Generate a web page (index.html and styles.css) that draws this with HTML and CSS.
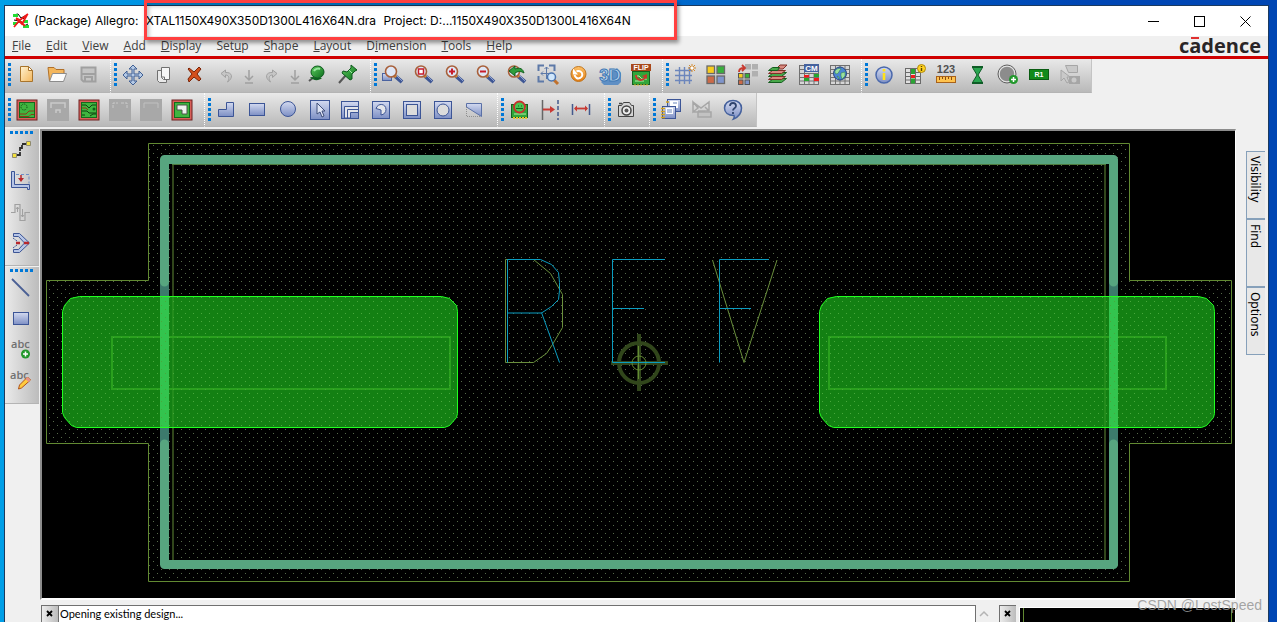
FILE: index.html
```
<!DOCTYPE html>
<html lang="en">
<head>
    <meta charset="UTF-8">
    <meta name="viewport" content="width=device-width, initial-scale=1.0">
    <title>(Package) Allegro</title>
    <link rel="stylesheet" href="styles.css">
</head>
<body>
    <!-- Shared gradients and icon parts -->
    <svg class="defs" aria-hidden="true">
        <defs>
            <linearGradient id="blue" x1="0" y1="0" x2="0" y2="1"><stop offset="0" stop-color="#d3daf0"/><stop offset="1" stop-color="#7d8fc4"/></linearGradient>
            <linearGradient id="paper" x1="0" y1="0" x2="1" y2="1"><stop offset="0" stop-color="#fff3d2"/><stop offset="1" stop-color="#f3b65c"/></linearGradient>
            <linearGradient id="green" x1="0" y1="0" x2="1" y2="1"><stop offset="0" stop-color="#5fce5f"/><stop offset="1" stop-color="#0b6b1c"/></linearGradient>
            <linearGradient id="orange" x1="0" y1="0" x2="0" y2="1"><stop offset="0" stop-color="#ffc36a"/><stop offset="1" stop-color="#e07a10"/></linearGradient>
            <g id="lens">
                <path d="M12 12l7 6" stroke="#3f5794" stroke-width="4"/>
                <path d="M13 11l6 6" stroke="#8ea1d2" stroke-width="1"/>
                <path d="M11 11l2 2" stroke="#e08a2a" stroke-width="3"/>
                <circle cx="8" cy="7.500" r="5.500" fill="#dfe6f5" stroke="#a8603a" stroke-width="1.600"/>
            </g>
            <g id="pcb">
                <rect x="1" y="1" width="20" height="20" fill="#d8605a" stroke="#6e2020"/>
                <rect x="3.500" y="3.500" width="15" height="15" fill="#3fb53f" stroke="#156b1c"/>
            </g>
            <g id="tile"><rect x="1.500" y="1.500" width="19" height="19" fill="url(#blue)" stroke="#3c5596"/></g>
        </defs>
    </svg>

    <div class="window">
        <header class="title-bar">
            <svg class="app-icon" viewBox="0 0 18 18">
                <path d="M1 3l5-1 3 4 6-3M2 8l5 1 4-3 5 5M3 13l5-4 4 5 4-2" fill="none" stroke="#000"/>
                <path d="M1 2h5v3H1zM1 10h4v3H1zM12 8h4v3h-4zM11 13h6v3h-6zM7 9h3v2H7z" fill="#22dd33"/>
                <path d="M4 6l4 2 8-6M2 15l5-6 3 3 5-9M4 7l5 3 4 4" fill="none" stroke="#f01818" stroke-width="1.800"/>
            </svg>
            <h1 class="title-text">(Package) Allegro: <span class="title-file">XTAL1150X490X350D1300L416X64N.dra</span> <span>Project: D:...1150X490X350D1300L416X64N</span></h1>
            <div class="window-buttons">
                <button type="button" aria-label="Minimize"><svg viewBox="0 0 11 11"><path d="M0 5.500h11" stroke="#000"/></svg></button>
                <button type="button" aria-label="Maximize"><svg viewBox="0 0 11 11"><rect x=".5" y=".5" width="10" height="10" fill="none" stroke="#000"/></svg></button>
                <button type="button" aria-label="Close"><svg viewBox="0 0 11 11"><path d="M.5.5l10 10M10.500.5l-10 10" stroke="#000"/></svg></button>
            </div>
        </header>

        <nav class="menu-bar">
            <a href="#"><u>F</u>ile</a>
            <a href="#"><u>E</u>dit</a>
            <a href="#"><u>V</u>iew</a>
            <a href="#"><u>A</u>dd</a>
            <a href="#"><u>D</u>isplay</a>
            <a href="#">Set<u>u</u>p</a>
            <a href="#"><u>S</u>hape</a>
            <a href="#"><u>L</u>ayout</a>
            <a href="#">D<u>i</u>mension</a>
            <a href="#"><u>T</u>ools</a>
            <a href="#"><u>H</u>elp</a>
            <span class="brand">c<span class="brand-a">a</span>dence</span>
        </nav>

        <div class="toolbar-row row-main">
            <div class="toolbar">
                <span class="grip"></span>
                <button type="button" aria-label="New"><svg viewBox="0 0 22 22"><path d="M4.500 2.500h8l4 4v11h-12z" fill="url(#paper)" stroke="#a8742c"/><path d="M12.500 2.500v4h4z" fill="#fff" stroke="#a8742c"/></svg></button>
                <button type="button" aria-label="Open"><svg viewBox="0 0 22 22"><path d="M1 3.500h6l2 2h8v6L2.500 17z" fill="#f3b65c" stroke="#b0702a"/><path d="M5.500 9.500h14l-3 8h-14z" fill="#fbfbfb" stroke="#8c8c8c"/></svg></button>
                <button type="button" aria-label="Save" disabled><svg viewBox="0 0 22 22"><path d="M3.500 3.500h14v14h-12l-2-2z" fill="#c4c4c4" stroke="#a0a0a0" stroke-width="2"/><path d="M4 10h13M7 17v-4h7v4" fill="none" stroke="#a0a0a0" stroke-width="2"/></svg></button>
            </div>
            <div class="toolbar">
                <span class="grip"></span>
                <button type="button" aria-label="Move"><svg viewBox="0 0 22 22"><path d="M10 5v5H5V7l-4 4 4 4v-3h5v5H7l4 4 4-4h-3v-5h5v3l4-4-4-4v3h-5V5h3l-4-4-4 4z" fill="#b5c9e4" stroke="#3f5f94"/></svg></button>
                <button type="button" aria-label="Copy"><svg viewBox="0 0 22 22"><path d="M4.500 6.500h9v12h-7l-2-2z" fill="#e9e9e9" stroke="#707070"/><path d="M8.500 3.500h8v12h-6l-2-2z" fill="#f6f6f6" stroke="#707070"/><path d="M8.500 13h3v2.500" fill="none" stroke="#707070"/></svg></button>
                <button type="button" aria-label="Delete"><svg viewBox="0 0 22 22"><path d="M5 4l5 4 5-5 2 2-4 5 4 5-2 2-5-4-5 5-1-3 4-5-4-5z" fill="#d4501c" stroke="#7a2408"/></svg></button>
                <button type="button" aria-label="Undo" disabled><svg viewBox="0 0 22 22"><path d="M10.500 6L6 9.500l4.500 4v-2.500c4 0 4 4 2 7 6-4 5-10-2-9.500z" fill="#c6c6c6" stroke="#a0a0a0"/></svg></button>
                <button type="button" class="narrow" aria-label="Undo list" disabled><svg viewBox="0 0 14 22"><path d="M7 6v10M3 12l4 4 4-4M3 19h8" fill="none" stroke="#a0a0a0" stroke-width="1.500"/></svg></button>
                <button type="button" aria-label="Redo" disabled><svg viewBox="0 0 22 22"><path d="M11.500 6l4.500 3.500-4.500 4v-2.500c-4 0-4 4-2 7-6-4-5-10 2-9.500z" fill="#c6c6c6" stroke="#a0a0a0"/></svg></button>
                <button type="button" class="narrow" aria-label="Redo list" disabled><svg viewBox="0 0 14 22"><path d="M7 6v10M3 12l4 4 4-4M3 19h8" fill="none" stroke="#a0a0a0" stroke-width="1.500"/></svg></button>
                <button type="button" aria-label="Unfix"><svg viewBox="0 0 22 22"><path d="M2 17l5-4" stroke="#555" stroke-width="2"/><path d="M3 13c3 4 9 4 12 1z" fill="#0f6420"/><ellipse cx="10.500" cy="8" rx="6.500" ry="6" fill="url(#green)" stroke="#0e5a1e"/><path d="M7 7c1-2 4-3 6-2" fill="none" stroke="#9ae6a0" stroke-width="2"/></svg></button>
                <button type="button" aria-label="Fix"><svg viewBox="0 0 22 22"><path d="M1 19l7-8" stroke="#555" stroke-width="2"/><path d="M13 1l6 5-2 1-3 3v5l-2 1-8-7 1-2 4 1 4-4z" fill="url(#green)" stroke="#0e5a1e"/><path d="M11 6l3 3" stroke="#a0eaa6"/></svg></button>
            </div>
            <div class="toolbar">
                <span class="grip"></span>
                <button type="button" aria-label="Zoom points"><svg viewBox="0 0 22 22"><rect x=".5" y="9.500" width="9" height="7" fill="url(#blue)" stroke="#4a62a0"/><use href="#lens" x="1"/></svg></button>
                <button type="button" aria-label="Zoom fit"><svg viewBox="0 0 22 22"><use href="#lens"/><rect x="5.500" y="5" width="5" height="5" fill="#fff" stroke="#c81c2c" stroke-width="1.500"/></svg></button>
                <button type="button" aria-label="Zoom in"><svg viewBox="0 0 22 22"><use href="#lens"/><path d="M8 4.500v6M5 7.500h6" stroke="#c81c2c" stroke-width="2"/></svg></button>
                <button type="button" aria-label="Zoom out"><svg viewBox="0 0 22 22"><use href="#lens"/><path d="M5 7.500h6" stroke="#c81c2c" stroke-width="2"/></svg></button>
                <button type="button" aria-label="Zoom previous"><svg viewBox="0 0 22 22"><use href="#lens"/><path d="M3 7l6-5v3c5-2 8 0 9 4-3-2-6-2-9 0v3z" fill="#2f9e3d" stroke="#13601f"/></svg></button>
                <button type="button" aria-label="Zoom selection"><svg viewBox="0 0 22 22"><path d="M1.500 7V1.500H7M12 1.500h5.500V7M1.500 12v5.500H7" fill="none" stroke="#5d79a8" stroke-width="2"/><path d="M9.500 3v12M4 9.500h12M7.500 5l2-2 2 2M6 7.500l-2 2 2 2" fill="none" stroke="#5d79a8"/><path d="M17 16l4 4" stroke="#c0712c" stroke-width="3"/><circle cx="14.500" cy="13" r="4" fill="#cfe6fb" stroke="#4a74b0" stroke-width="1.500"/></svg></button>
                <button type="button" aria-label="Redraw"><svg viewBox="0 0 22 22"><circle cx="10.500" cy="10" r="7.500" fill="url(#orange)" stroke="#c0751e"/><path d="M6.500 11c1 3 3 4 5.500 3 3-1 3-5 .5-6.500-1-.6-2.500-.7-4-.2" fill="none" stroke="#fff" stroke-width="2"/><path d="M5 4.500v6h5z" fill="#fff"/></svg></button>
                <button type="button" aria-label="3D view"><svg viewBox="0 0 22 22"><path d="M2 18l3 3h14l3-3V9l-4-5z" fill="#5f8fc4"/><text x="11" y="17" class="icon-3d">3D</text></svg></button>
                <button type="button" aria-label="Flip"><svg viewBox="0 0 22 22"><rect x="2.500" y="7.500" width="17" height="13" fill="#31a63a" stroke="#14601e"/><path d="M5 12h4l3 3h5M5 17h9" fill="none" stroke="#b7efa8"/><path d="M6 11c0 5 6 7 10 2" fill="none" stroke="#c43a2c" stroke-width="2"/><path d="M17 15v-5l-5 2z" fill="#c43a2c"/><path d="M4 21h14" stroke="#e2c22c" stroke-dasharray="2 1"/><rect x="1" y="0" width="20" height="7" fill="#a8481a"/><text x="11" y="6" class="icon-flip">FLIP</text></svg></button>
            </div>
            <div class="toolbar">
                <span class="grip"></span>
                <button type="button" aria-label="Grid"><svg viewBox="0 0 22 22"><path d="M1 6.500h17M1 11.500h17M1 16.500h17M5.500 3v17M10.500 3v17M15.500 3v17" stroke="#6c86bc" stroke-width="1.400"/><path d="M18 0v8M14 4h8M15 1l6 6M21 1l-6 6" stroke="#d58b2c"/><circle cx="18" cy="4" r="1.500" fill="#fff"/></svg></button>
                <button type="button" aria-label="Colors"><svg viewBox="0 0 22 22"><g stroke="#6a6a6a" stroke-width="1.300"><rect x="2" y="2" width="7.500" height="7.500" fill="#f8cc1e"/><rect x="12" y="2" width="7.500" height="7.500" fill="#38b03c"/><rect x="2" y="12" width="7.500" height="7.500" fill="#cc6a48"/><rect x="12" y="12" width="7.500" height="7.500" fill="#7f95cc"/></g></svg></button>
                <button type="button" aria-label="Shadow mode"><svg viewBox="0 0 22 22"><path d="M9 0h6v5.500H9zM16 0h6v5.500h-6zM16 7h6v5.500h-6z" fill="#b0b0b0"/><g stroke="#555"><rect x="2.500" y="9.500" width="4.500" height="4.500" fill="#f8cc1e"/><rect x="9" y="9.500" width="4.500" height="4.500" fill="#38b03c"/><rect x="2.500" y="16" width="4.500" height="4.500" fill="#cc6a48"/><rect x="9" y="16" width="4.500" height="4.500" fill="#7f95cc"/></g><path d="M3 8c0-3 2-4 5-4M6 1l3 3-3 3" fill="none" stroke="#c83a30" stroke-width="1.800"/></svg></button>
                <button type="button" aria-label="Cross section"><svg viewBox="0 0 22 22"><path d="M1.500 18.500l5-4h13l-5 4zM1.500 12.500l5-4h13l-5 4z" fill="#48a84a" stroke="#145c1e"/><path d="M1.500 15.500l4-3h13l-4 3zM1.500 9.500l4-3h13l-4 3zM9 5l4-4h7l-4 4z" fill="#d88a80" stroke="#803028"/><path d="M1.500 6.500l4-3h7l-2 3z" fill="#48a84a" stroke="#145c1e"/></svg></button>
                <button type="button" aria-label="Constraint manager"><svg viewBox="0 0 22 22"><rect x="1.500" y="1.500" width="19" height="19" fill="#d6d6d6" stroke="#707070"/><path d="M1 5.500h20M1 9.500h20M1 13.500h20M1 17h20M6.500 1v20M11 9v12M16 9v12" stroke="#707070"/><path d="M6 11h5v2.500H6zM16 14h5v3h-5z" fill="#ee1c1c"/><path d="M6 14h5v3H6zM16 10h5v3h-5z" fill="#25a52e"/><rect x="6" y="0" width="15" height="8" fill="#46629e"/><text x="13.500" y="7" class="icon-cm">CM</text></svg></button>
                <button type="button" aria-label="Global view"><svg viewBox="0 0 22 22"><rect x="1.500" y="1.500" width="19" height="19" fill="#d6d6d6" stroke="#707070"/><path d="M1 5.500h20M1 9.500h20M1 13.500h20M1 17h20M6.500 1v20M11 1v20M16 1v20" stroke="#707070"/><circle cx="11" cy="9.500" r="6.500" fill="#4b86d4" stroke="#28457e"/><path d="M6 7c2-3 5-3 6-2-1 2-2 1-2 3l-2 2-2-1zM12 9l4-1v4l-3 3-1-3zM8 12l2 1v2z" fill="#9be0a0" stroke="#2c7c46" stroke-width=".5"/></svg></button>
            </div>
            <div class="toolbar">
                <span class="grip"></span>
                <button type="button" aria-label="Show element"><svg viewBox="0 0 22 22"><circle cx="11" cy="11" r="8" fill="url(#blue)" stroke="#4a68ac" stroke-width="1.500"/><path d="M11 5v2.500M11 9v7" stroke="#ffe21c" stroke-width="2.600"/></svg></button>
                <button type="button" aria-label="Properties"><svg viewBox="0 0 22 22"><rect x="1.500" y="4.500" width="15" height="15" fill="#e0e0e0" stroke="#6a6a6a"/><path d="M1 8.500h16M1 12.500h16M1 16h16M6.500 4v16M11.500 4v16" stroke="#6a6a6a"/><path d="M7 5h4v5H7zM7 14.500h4v5H7z" fill="#2aa434"/><path d="M7 11h4v3H7z" fill="#ee1c1c"/><circle cx="17.500" cy="4.500" r="4" fill="#ffd21e" stroke="#b08a10"/><path d="M17.500 2v1M17.500 4v3" stroke="#5a4300" stroke-width="1.400"/></svg></button>
                <button type="button" aria-label="Measure"><svg viewBox="0 0 22 22"><text x="11" y="9" class="icon-123">123</text><rect x="1.500" y="12.500" width="19" height="6" fill="#ffc34e" stroke="#a8621c"/><path d="M4.500 13v3M7.500 13v2M10.500 13v3M13.500 13v2M16.500 13v3" stroke="#8a4c12"/></svg></button>
                <button type="button" aria-label="Wait"><svg viewBox="0 0 22 22"><path d="M6.500 3.500h10L12 11l4.500 7.500h-10L11 11z" fill="#2aa550" stroke="#0e5c26"/><path d="M6 3h11M6 19h11" stroke="#0e5c26" stroke-width="2"/></svg></button>
                <button type="button" aria-label="Add via"><svg viewBox="0 0 22 22"><circle cx="10" cy="10" r="8" fill="#8c8c8c" stroke="#e2e2e2" stroke-width="1.500"/><circle cx="10" cy="10" r="9" fill="none" stroke="#5e5e5e"/><circle cx="16.500" cy="15.500" r="4.500" fill="#22982c"/><path d="M14 15.500h5M16.500 13v5" stroke="#fff" stroke-width="1.500"/></svg></button>
                <button type="button" aria-label="Reference designator"><svg viewBox="0 0 22 22"><rect x="1.500" y="5.500" width="19" height="10" fill="#118a1a" stroke="#0a5c12"/><text x="11" y="13" class="icon-r1">R1</text></svg></button>
                <button type="button" aria-label="Probe" disabled><svg viewBox="0 0 22 22"><path d="M6.500 1.500h12v7h-9zM2 6v11l3-3 3 5 2-1-2-5h3z" fill="#c9c9c9" stroke="#a6a6a6"/><path d="M10 12h11v8H10z" fill="#a6a6a6"/><circle cx="15" cy="16" r="2.500" fill="#c9c9c9"/></svg></button>
            </div>
        </div>

        <div class="toolbar-row row-shape">
            <div class="toolbar">
                <span class="grip"></span>
                <button type="button" aria-label="General edit"><svg viewBox="0 0 22 22"><use href="#pcb"/><circle cx="8" cy="8" r="3" fill="none" stroke="#0f3f12" stroke-dasharray="1 1"/><path d="M4 15h6l3-3h5M4 17.500h9l2-2h3" fill="none" stroke="#8a3a1a"/></svg></button>
                <button type="button" aria-label="Placement edit" disabled><svg viewBox="0 0 22 22"><path d="M0 0h22v22H0z" fill="#a8a8a8"/><path d="M4 9V4h14v5M9 14v-3h4v3" fill="none" stroke="#c9c9c9" stroke-width="1.500"/></svg></button>
                <button type="button" aria-label="Etch edit"><svg viewBox="0 0 22 22"><use href="#pcb"/><path d="M4 6h4l3 3 3-3h4M4 12h5l2 2h7M4 16h3M12 17l3-2h3" fill="none" stroke="#0f3f12"/><path d="M4 9h4l2 2" fill="none" stroke="#8a3a1a"/><circle cx="16" cy="10" r="1.500" fill="#0f5f1a"/></svg></button>
                <button type="button" aria-label="Flow planning" disabled><svg viewBox="0 0 22 22"><path d="M0 0h22v22H0z" fill="#a8a8a8"/><path d="M4 9V4h5M12 4h6v5" fill="none" stroke="#c9c9c9" stroke-dasharray="3 1"/></svg></button>
                <button type="button" aria-label="Signal integrity" disabled><svg viewBox="0 0 22 22"><path d="M0 0h22v22H0z" fill="#a8a8a8"/><path d="M4 9V4h14v5" fill="none" stroke="#c0c0c0"/></svg></button>
                <button type="button" aria-label="Shape edit"><svg viewBox="0 0 22 22"><use href="#pcb"/><path d="M6 6h10v9h-5v-4H6z" fill="#eef2ee" stroke="#4d554d"/></svg></button>
            </div>
            <div class="toolbar">
                <span class="grip"></span>
                <button type="button" aria-label="Add shape"><svg viewBox="0 0 22 22"><path d="M2.500 10.500h8v-7h7v14h-15z" fill="url(#blue)" stroke="#3c5596"/></svg></button>
                <button type="button" aria-label="Add rectangle shape"><svg viewBox="0 0 22 22"><rect x="2.500" y="4.500" width="15" height="12" fill="url(#blue)" stroke="#3c5596"/></svg></button>
                <button type="button" aria-label="Add circle shape"><svg viewBox="0 0 22 22"><circle cx="10" cy="10" r="7.500" fill="url(#blue)" stroke="#3c5596"/></svg></button>
                <button type="button" aria-label="Select shape"><svg viewBox="0 0 22 22"><use href="#tile"/><path d="M8 4v11l3-2 2 5 2-1-2-5h3z" fill="#dde3f3" stroke="#3f4f7a"/></svg></button>
                <button type="button" aria-label="Shape void polygon"><svg viewBox="0 0 22 22"><rect x="1.500" y="2.500" width="17" height="17" fill="url(#blue)" stroke="#3c5596"/><path d="M4.500 19V7.500h14v6h-8V19z" fill="#e3e5ea" stroke="#3c5596"/><path d="M7.500 19v-8.500H18" fill="none" stroke="#3c5596"/></svg></button>
                <button type="button" aria-label="Shape void arc"><svg viewBox="0 0 22 22"><rect x="1.500" y="2.500" width="17" height="17" fill="url(#blue)" stroke="#3c5596"/><path d="M5 9.500c2-6 10-5 10 1 0 3-2 5-5 5.500v-5z" fill="#e3e5ea" stroke="#3c5596"/></svg></button>
                <button type="button" aria-label="Shape void rectangle"><svg viewBox="0 0 22 22"><rect x="1.500" y="2.500" width="17" height="17" fill="url(#blue)" stroke="#3c5596"/><rect x="4.500" y="5.500" width="11" height="11" fill="#dcdcdc" stroke="#3c5596"/></svg></button>
                <button type="button" aria-label="Shape void circle"><svg viewBox="0 0 22 22"><rect x="1.500" y="2.500" width="17" height="17" fill="url(#blue)" stroke="#3c5596"/><circle cx="10" cy="11" r="6" fill="#dcdcdc" stroke="#3c5596"/></svg></button>
                <button type="button" aria-label="Delete void"><svg viewBox="0 0 22 22"><path d="M2.500 4.500h15v13L2.500 8z" fill="url(#blue)" stroke="#5a70a6"/><path d="M2.500 8v9.500H17" fill="none" stroke="#909090" stroke-dasharray="1 1"/></svg></button>
            </div>
            <div class="toolbar">
                <span class="grip"></span>
                <button type="button" aria-label="Dimension edit"><svg viewBox="0 0 22 22"><rect x="2.500" y="5.500" width="16" height="13" fill="#31a63a" stroke="#14601e"/><path d="M5 9h3M14 9h3M5 15h12" stroke="#b7efa8"/><path d="M4 19h14" stroke="#e2c22c" stroke-dasharray="2 1" stroke-width="2"/><circle cx="10.500" cy="8" r="5.500" fill="#48c450" stroke="#c8302c" stroke-width="1.800"/><path d="M7 9.500h7M9 7h1M12 7h1" stroke="#0f5f1a"/></svg></button>
                <button type="button" aria-label="Datum dimension"><svg viewBox="0 0 22 22"><path d="M2.500 1v20" stroke="#666" stroke-width="1.500"/><path d="M18 1v20" stroke="#44598c" stroke-width="1.500" stroke-dasharray="4 2"/><path d="M3 10.500h8" stroke="#c83a34" stroke-width="2"/><path d="M10 7l5 3.500-5 3.500z" fill="#c83a34"/></svg></button>
                <button type="button" aria-label="Linear dimension"><svg viewBox="0 0 22 22"><path d="M1.500 5v11M18.500 5v11" stroke="#44598c" stroke-width="1.500"/><path d="M4 9.500h12" stroke="#c83a34" stroke-width="1.800"/><path d="M6 6.500l-3 3 3 3zM14 6.500l3 3-3 3z" fill="#c83a34"/></svg></button>
            </div>
            <div class="toolbar">
                <span class="grip"></span>
                <button type="button" aria-label="Snapshot"><svg viewBox="0 0 22 22"><path d="M2.500 6.500h3l2-3h6l2 3h2v11h-15z" fill="#d4d4d4" stroke="#444"/><path d="M3 4.500h3" stroke="#444" stroke-width="1.500"/><circle cx="10.500" cy="11.500" r="4.500" fill="#efefef" stroke="#444" stroke-width="1.500"/><circle cx="10.500" cy="11.500" r="2" fill="#555"/></svg></button>
            </div>
            <div class="toolbar">
                <span class="grip"></span>
                <button type="button" aria-label="Reports"><svg viewBox="0 0 22 22"><rect x="6.500" y=".5" width="13" height="12" fill="url(#blue)" stroke="#3c5596"/><path d="M9 2h8v7H9z" fill="#fff"/><rect x="1.500" y="7.500" width="13" height="12" fill="url(#blue)" stroke="#3c5596"/><path d="M5 9h7v6H5z" fill="#fff"/><path d="M6 11h5M6 13h5M12 4h4" stroke="#6c86bc"/><path d="M0 9.500h4M0 12.500h4M0 15.500h4M0 18.500h4M5 3h3" stroke="#d5a41c" stroke-width="1.500"/></svg></button>
                <button type="button" aria-label="Drafting" disabled><svg viewBox="0 0 22 22"><path d="M1 3v10l5-4zM1 3l8 6 8-6v9H6M13 8l4 4M1 13h12" fill="none" stroke="#a6a6a6" stroke-width="1.500"/><path d="M6 13h13v5H6z" fill="#c2c2c2" stroke="#a6a6a6" stroke-width="1.500"/></svg></button>
                <button type="button" aria-label="Help"><svg viewBox="0 0 22 22"><path d="M10 1.500c5 0 8.500 3 8.500 7.500 0 5-3 9-8 11 1-1.500 1-2.500.5-3.500-6 0-9.500-3-9.500-7.500s3.500-7.500 8.500-7.500z" fill="url(#blue)" stroke="#44609c" stroke-width="1.500"/><path d="M7 7c0-4 6-4 6 0 0 2.500-3 2-3 4.500M10 13v2" fill="none" stroke="#30446e" stroke-width="1.800"/></svg></button>
            </div>
        </div>

        <div class="workspace">
            <aside class="side-tools">
                <div class="side-toolbar">
                    <span class="side-grip"></span>
                    <button type="button" aria-label="Add connect"><svg viewBox="0 0 22 22"><path d="M5 16h5V9h2V5h5" fill="none" stroke="#2e2e2e" stroke-width="1.800" stroke-dasharray="8 1"/><path d="M2.500 14.500h4v4h-4zM16.500 2.500h4v4h-4z" fill="#f4e23c" stroke="#8f8a70"/></svg></button>
                    <button type="button" aria-label="Slide"><svg viewBox="0 0 22 22"><path d="M6 4.500h13v9" fill="none" stroke="#6f8fc8" stroke-dasharray="3 2"/><path d="M1.500 1.500h3v13h15v5h-2v-2h-16z" fill="#b6c5e6" stroke="#3c5596"/><path d="M11 5v4" stroke="#b8282c" stroke-width="1.500"/><path d="M8 8h6l-3 4z" fill="#b8282c"/></svg></button>
                    <button type="button" aria-label="Delay tune" disabled><svg viewBox="0 0 22 22"><path d="M1 11.500h4v-8h5v16h5v-8h5" fill="none" stroke="#a0a0a0" stroke-width="1.200"/><path d="M7.500 11V6M12.500 8v8M6 8l1.500-2L9 8M11 14l1.500 2 1.500-2" fill="none" stroke="#a0a0a0"/></svg></button>
                    <button type="button" aria-label="Gloss"><svg viewBox="0 0 22 22"><path d="M3.500 1.500h6l10 9.500-10 9.500h-6v-3h5l6-6.500-6-6.500h-5z" fill="#b6c5e6" stroke="#3c5596"/><path d="M3 6l4 3M3 16l4-3" stroke="#3c5596" stroke-dasharray="2 1"/><path d="M6 11h4M14 11h5" stroke="#b8282c" stroke-width="2.500"/></svg></button>
                </div>
                <div class="side-toolbar">
                    <span class="side-grip"></span>
                    <button type="button" aria-label="Add line"><svg viewBox="0 0 22 22"><path d="M2 2l17 17" stroke="#4a5f94" stroke-width="1.800"/></svg></button>
                    <button type="button" aria-label="Add rectangle"><svg viewBox="0 0 22 22"><rect x="3.500" y="4.500" width="15" height="12" fill="url(#blue)" stroke="#3c5596"/></svg></button>
                    <button type="button" aria-label="Add text"><svg viewBox="0 0 22 22"><text x="1" y="9" class="icon-abc">abc</text><circle cx="15.500" cy="15" r="4.500" fill="#22982c"/><path d="M13 15h5M15.500 12.500v5" stroke="#fff" stroke-width="1.500"/></svg></button>
                    <button type="button" aria-label="Edit text"><svg viewBox="0 0 22 22"><text x="0" y="9" class="icon-abc">abc</text><path d="M8.500 19l1-4 8-8 3 3-9 8z" fill="#ffcb3e" stroke="#b0521c"/><path d="M17.500 7l3 3-2 2-3-3z" fill="#e8928a"/></svg></button>
                </div>
            </aside>

            <main class="main">
                <div class="canvas">
                    <!-- Drawing coordinates are screen units, origin at the window corner -->
                    <svg class="board" viewBox="42 131 1193 467" role="img" aria-label="Package symbol drawing">
                        <defs>
                            <pattern id="dots" x="0" y="0" width="8" height="8" patternUnits="userSpaceOnUse">
                                <rect x="1" y="1" width="1" height="1" fill="#56694a"/>
                                <rect x="5" y="5" width="1" height="1" fill="#56694a"/>
                            </pattern>
                            <pattern id="pad-dots" x="0" y="0" width="8" height="8" patternUnits="userSpaceOnUse">
                                <rect x="1" y="1" width="1" height="1" fill="#48a83c"/>
                                <rect x="5" y="5" width="1" height="1" fill="#48a83c"/>
                            </pattern>
                            <path id="pad" d="M79.500 296.500h362l8 2 7 7 1 6v102l-1 4-7 8-5 2h-368l-5-2-7-8-2-5v-101l2-6 6-7z"/>
                        </defs>

                        <path d="M148.500 143.500h981v137h102v163h-102v138h-981v-138h-102v-163h102z" fill="url(#dots)" stroke="#628a32"/>

                        <!-- inner body outline -->
                        <path d="M173 164v397M1105 164v397" stroke="#31461b" stroke-width="2"/>
                        <path d="M172 164.500h934" stroke="#4d7a3c"/>

                        <!-- body silkscreen -->
                        <path d="M164.500 282v162M1113.500 282v162" stroke="#3c7a6c" stroke-width="9"/>
                        <path d="M164.500 282V159.500h949V282M164.500 444v120.500h949V444" fill="none" stroke="#57a57f" stroke-width="9" stroke-linejoin="round" stroke-linecap="round"/>

                        <!-- pads -->
                        <use href="#pad" fill="#138013"/>
                        <use href="#pad" x="757" fill="#138013"/>
                        <path d="M173 297v130M1105 297v130" stroke="#238c1c" stroke-width="2"/>
                        <path d="M112 337h338v52H112zM829 337h337v52H829z" fill="none" stroke="#2aa01e" stroke-width="2"/>
                        <path d="M164.500 297v130M1113.500 297v130" stroke="#33c44e" stroke-width="9"/>
                        <use href="#pad" fill="url(#pad-dots)" stroke="#21ff21"/>
                        <use href="#pad" x="757" fill="url(#pad-dots)" stroke="#21ff21"/>

                        <!-- origin target -->
                        <g stroke="#31461b" stroke-width="4" fill="none">
                            <circle cx="639" cy="363" r="20"/>
                            <path d="M639 334v57M611 363h57"/>
                        </g>
                        <circle cx="639" cy="363" r="7" fill="none" stroke="#628a32"/>
                        <path d="M638.500 346v33" stroke="#628a32"/>

                        <!-- REF and DEV stroke text -->
                        <g fill="none" stroke="#6a8f3c">
                            <path d="M505.500 259.500v103h28l13-9 6-9 10-17v-33l-12-21-17-14z"/>
                            <path d="M712.500 260l31.500 102.500L777 260"/>
                        </g>
                        <g fill="none" stroke="#0a9cc0">
                            <path d="M507.500 362.500v-103h33l11 5 7 8 1 10v8l-1 9-7 7-10 6.500h-34M541.500 312.500l18 50"/>
                            <path d="M665 259.500h-52.500v103H665M612.500 308.500H644"/>
                            <path d="M769 259.500h-49.500v103M719.500 308.500H751"/>
                        </g>
                    </svg>
                </div>

                <div class="bottom-row">
                    <button type="button" class="panel-close" aria-label="Close command window"><svg viewBox="0 0 8 8"><path d="M1 1l5 5M6 1l-5 5" stroke="#000" stroke-width="1.800"/></svg></button>
                    <div class="log">Opening existing design...</div>
                    <button type="button" class="scroll-up" aria-label="Scroll up"><svg viewBox="0 0 10 8"><path d="M1 6l4-4 4 4" fill="none" stroke="#b4b4b4" stroke-width="1.500"/></svg></button>
                    <button type="button" class="panel-close" aria-label="Close world view"><svg viewBox="0 0 8 8"><path d="M1 1l5 5M6 1l-5 5" stroke="#000" stroke-width="1.800"/></svg></button>
                    <div class="world-view"></div>
                </div>
            </main>

            <aside class="dock-tabs">
                <button type="button">Visibility</button>
                <button type="button">Find</button>
                <button type="button">Options</button>
            </aside>
        </div>
    </div>

    <div class="title-marker"></div>
    <div class="watermark">CSDN @LostSpeed</div>
</body>
</html>
```

FILE: styles.css
```
* {
    box-sizing: border-box;
}

body {
    margin: 0;
    height: 100vh;
    overflow: hidden;
    position: relative;
    font-family: 'Open Sans', sans-serif;
    font-size: 12px;
    color: #000;
    background: linear-gradient(to right, #009fe8 0%, #0078d7 40%, #0046b4 85%);
    padding: 5px 8px 0 4px;
}

button {
    font: inherit;
    border: none;
    padding: 0;
    margin: 0;
    background: none;
    display: flex;
    align-items: center;
    justify-content: center;
}

svg {
    display: block;
}

.defs {
    position: absolute;
    width: 0;
    height: 0;
}

.window {
    height: 100%;
    display: flex;
    flex-direction: column;
    background: #f0f0f0;
    border: 1px solid #1c3a5e;
    border-bottom: none;
}

/* Title bar */
.title-bar {
    display: flex;
    align-items: center;
    height: 30px;
    padding-left: 7px;
    background: #fff;
}
.app-icon {
    width: 18px;
    height: 18px;
    margin-right: 4px;
}
.title-text {
    margin: 0;
    font-family: Inter, sans-serif;
    font-size: 12px;
    line-height: 16px;
    font-weight: 400;
    white-space: pre;
}
.title-file {
    margin: 0 4px;
}
.window-buttons {
    display: flex;
    margin-left: auto;
}
.window-buttons button {
    width: 46px;
    height: 30px;
}
.window-buttons svg {
    width: 11px;
    height: 11px;
}

/* Menu */
.menu-bar {
    display: flex;
    align-items: center;
    gap: 15px;
    height: 23px;
    padding: 0 7px 1px;
    border-bottom: 3px solid #d00000;
}
.menu-bar a {
    color: #404040;
    text-decoration: none;
}
.brand {
    margin-left: auto;
    font-size: 20px;
    line-height: 20px;
    font-weight: 700;
    color: #2a2527;
}
.brand-a {
    position: relative;
}
.brand-a::before {
    content: '';
    position: absolute;
    left: 2px;
    top: 5px;
    width: 8px;
    height: 2px;
    background: #e03030;
}

/* Toolbars */
.toolbar-row {
    display: flex;
    height: 34px;
}
.toolbar {
    display: flex;
    align-items: center;
    padding: 0 7px 0 3px;
    background: linear-gradient(to bottom, #e9e9e9, #b9b9b9);
    border-right: 1px dotted #fff;
    border-bottom: 1px solid #b4b4b4;
}
.toolbar:last-child {
    border-right: 1px solid #c4c4c4;
}
.row-main .toolbar {
    padding-right: 6px;
    padding-bottom: 2px;
}
.toolbar button {
    width: 31px;
    height: 30px;
}
.toolbar button.narrow {
    width: 15px;
}
.toolbar svg {
    width: 22px;
    height: 22px;
    overflow: visible;
}
.toolbar .narrow svg {
    width: 14px;
}
.grip {
    width: 3px;
    height: 23px;
    background: repeating-linear-gradient(to bottom, #0078d7 0 3px, transparent 3px 5px);
}

.icon-3d,
.icon-flip,
.icon-cm,
.icon-123,
.icon-r1 {
    font-family: 'Liberation Sans', sans-serif;
    font-weight: 700;
    text-anchor: middle;
}
.icon-3d {
    font-size: 17px;
    fill: #b4d4ef;
    stroke: #3f78b4;
    stroke-width: 1px;
}
.icon-flip {
    font-size: 7px;
    fill: #fff;
}
.icon-cm {
    font-size: 8px;
    fill: #fff;
}
.icon-123 {
    font-size: 11px;
    fill: #505050;
}
.icon-r1 {
    font-size: 7px;
    fill: #fff;
}
.icon-abc {
    font-family: 'Open Sans', sans-serif;
    font-size: 11px;
    font-weight: 600;
    fill: #707070;
}

/* Workspace */
.workspace {
    display: flex;
    flex: 1;
    min-height: 0;
    padding-top: 2px;
}
.side-tools {
    width: 35px;
    padding-right: 1px;
}
.side-toolbar {
    display: flex;
    flex-direction: column;
    padding: 2px 0 7px;
    margin-bottom: 1px;
    background: linear-gradient(to right, #eaeaea, #bcbcbc);
    border-bottom: 1px solid #b4b4b4;
}
.side-toolbar button {
    width: 31px;
    height: 31px;
}
.side-toolbar svg {
    width: 22px;
    height: 22px;
    overflow: visible;
}
.side-grip {
    width: 23px;
    height: 3px;
    margin-left: 5px;
    background: repeating-linear-gradient(to right, #0078d7 0 3px, transparent 3px 5px);
}

.main {
    display: flex;
    flex-direction: column;
    flex: 1;
    min-width: 0;
}
.canvas {
    flex: 1;
    min-height: 0;
    background: #000;
    border-style: solid;
    border-width: 2px 1px 2px 2px;
    border-color: #8c8c8c #fff #fff #8c8c8c;
}
.board {
    width: 100%;
    height: 100%;
}

.bottom-row {
    display: flex;
    height: 22px;
    padding: 5px 0 0 1px;
}
.panel-close {
    width: 17px;
    background: linear-gradient(to right, #ececec, #bcbcbc);
    border-top: 1px solid #707070;
    border-left: 1px solid #707070;
}
.panel-close svg {
    width: 8px;
    height: 8px;
}
.log {
    flex: 1;
    padding-left: 1px;
    font-family: Lato, sans-serif;
    font-size: 11px;
    line-height: 16px;
    background: #fff;
    border: 1px solid #707070;
    border-bottom: none;
}
.scroll-up {
    width: 16px;
    margin-right: 7px;
}
.scroll-up svg {
    width: 10px;
    height: 8px;
}
.world-view {
    width: 217px;
    margin: 2px 0 0 3px;
    background: #000;
    border: 1px solid #fff;
    border-bottom: none;
    padding: 0 3px;
}
.world-view::before {
    content: '';
    display: block;
    height: 100%;
    border-left: 1px solid #628a32;
    border-right: 1px solid #628a32;
}

/* Docked panel tabs */
.dock-tabs {
    width: 32px;
    padding: 22px 3px 0 10px;
}
.dock-tabs button {
    width: 19px;
    height: 68px;
    padding: 4px 2px 0 0;
    justify-content: flex-start;
    writing-mode: vertical-rl;
    line-height: 16px;
    font-family: 'Noto Sans', sans-serif;
    font-size: 12px;
    color: #000;
    background: #e8e8e8;
    border: 1px solid #86a0ba;
    border-right: none;
}

/* Callout around the file name */
.title-marker {
    position: absolute;
    left: 144px;
    top: 0;
    width: 533px;
    height: 40px;
    border: 3px solid #ff4040;
    box-shadow: 2px 3px 4px rgba(0, 0, 0, 0.4), inset 2px 3px 4px rgba(0, 0, 0, 0.25);
}

.watermark {
    position: absolute;
    right: 15px;
    bottom: 9px;
    font-family: 'Liberation Sans', sans-serif;
    font-size: 14px;
    line-height: 16px;
    color: rgba(150, 150, 150, 0.85);
}
```
